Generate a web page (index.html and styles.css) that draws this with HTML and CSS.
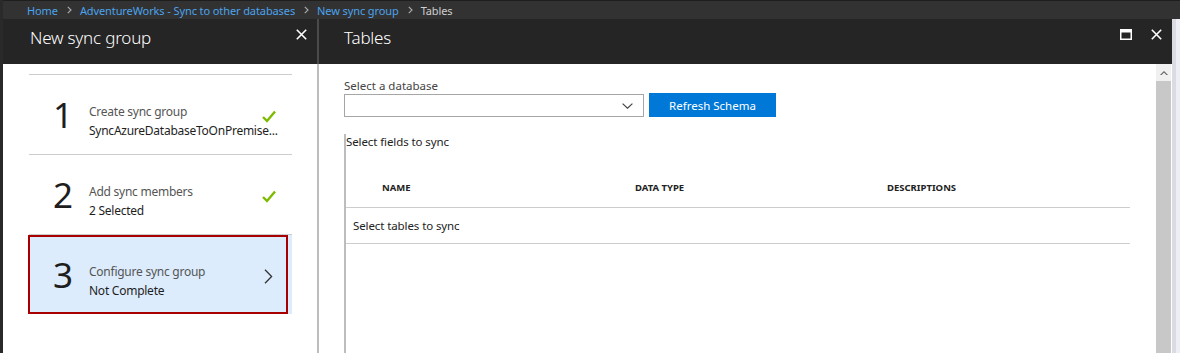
FILE: index.html
```html
<!DOCTYPE html>
<html lang="en">
<head>
    <meta charset="UTF-8">
    <meta name="viewport" content="width=device-width, initial-scale=1.0">
    <title>Tables - New sync group</title>
    <link rel="stylesheet" href="styles.css">
</head>
<body>
    <div class="portal">
        <nav class="breadcrumb">
            <a href="#">Home</a>
            <svg class="crumb-sep" width="5" height="8" viewBox="0 0 5 8"><path d="M0.8 0.8 L4 4 L0.8 7.2" fill="none" stroke="#a8a8a8" stroke-width="1.2"/></svg>
            <a href="#">AdventureWorks - Sync to other databases</a>
            <svg class="crumb-sep" width="5" height="8" viewBox="0 0 5 8"><path d="M0.8 0.8 L4 4 L0.8 7.2" fill="none" stroke="#a8a8a8" stroke-width="1.2"/></svg>
            <a href="#">New sync group</a>
            <svg class="crumb-sep" width="5" height="8" viewBox="0 0 5 8"><path d="M0.8 0.8 L4 4 L0.8 7.2" fill="none" stroke="#a8a8a8" stroke-width="1.2"/></svg>
            <span class="crumb-current">Tables</span>
        </nav>

        <div class="blades">
            <!-- left blade: wizard steps -->
            <section class="blade blade-steps">
                <header class="blade-header">
                    <h2>New sync group</h2>
                    <div class="blade-actions">
                        <svg width="11" height="11" viewBox="0 0 11 11"><path d="M0.8 0.8 L10.2 10.2 M10.2 0.8 L0.8 10.2" stroke="#fff" stroke-width="1.6"/></svg>
                    </div>
                </header>
                <div class="blade-body">
                    <ul class="steps">
                        <li class="step">
                            <div class="step-inner">
                                <div class="step-num">1</div>
                                <div class="step-text">
                                    <div class="step-title">
                                        <span>Create sync group</span>
                                        <svg class="step-check" width="14" height="13" viewBox="0 0 14 13"><path d="M1 7 L5 11 L13 1.5" fill="none" stroke="#7fba00" stroke-width="2.4"/></svg>
                                    </div>
                                    <div class="step-sub">SyncAzureDatabaseToOnPremise...</div>
                                </div>
                            </div>
                        </li>
                        <li class="step">
                            <div class="step-inner">
                                <div class="step-num">2</div>
                                <div class="step-text">
                                    <div class="step-title">
                                        <span>Add sync members</span>
                                        <svg class="step-check" width="14" height="13" viewBox="0 0 14 13"><path d="M1 7 L5 11 L13 1.5" fill="none" stroke="#7fba00" stroke-width="2.4"/></svg>
                                    </div>
                                    <div class="step-sub">2 Selected</div>
                                </div>
                            </div>
                        </li>
                        <li class="step active">
                            <div class="step-inner">
                                <div class="step-num">3</div>
                                <div class="step-text">
                                    <div class="step-title">
                                        <span>Configure sync group</span>
                                        <svg class="step-chevron" width="9" height="15" viewBox="0 0 9 15"><path d="M1 0.8 L7.6 7.5 L1 14.2" fill="none" stroke="#333" stroke-width="1.3"/></svg>
                                    </div>
                                    <div class="step-sub">Not Complete</div>
                                </div>
                            </div>
                        </li>
                    </ul>
                </div>
            </section>

            <div class="blade-divider"></div>

            <!-- right blade: tables -->
            <section class="blade blade-tables">
                <header class="blade-header">
                    <h2>Tables</h2>
                    <div class="blade-actions">
                        <svg width="12" height="11" viewBox="0 0 12 11"><rect x="0.75" y="0.75" width="10.5" height="9.5" fill="none" stroke="#fff" stroke-width="1.5"/><rect x="0" y="0" width="12" height="3.5" fill="#fff"/></svg>
                        <svg width="11" height="11" viewBox="0 0 11 11"><path d="M0.8 0.8 L10.2 10.2 M10.2 0.8 L0.8 10.2" stroke="#fff" stroke-width="1.6"/></svg>
                    </div>
                </header>
                <div class="blade-content">
                    <div class="blade-main">
                        <label class="field-label">Select a database</label>
                        <div class="db-row">
                            <div class="dropdown">
                                <svg width="11" height="6" viewBox="0 0 11 6"><path d="M0.6 0.6 L5.5 5.2 L10.4 0.6" fill="none" stroke="#444" stroke-width="1.2"/></svg>
                            </div>
                            <button class="btn-primary">Refresh Schema</button>
                        </div>

                        <div class="fields">
                            <div class="fields-title">Select fields to sync</div>
                            <div class="grid-head">
                                <div>Name</div>
                                <div>Data type</div>
                                <div>Descriptions</div>
                            </div>
                            <div class="grid-row">Select tables to sync</div>
                        </div>
                    </div>
                    <div class="scrollbar">
                        <div class="scroll-up">
                            <svg width="8" height="5" viewBox="0 0 8 5"><path d="M0 5 L4 1 L8 5 L6.5 5 L4 2.6 L1.5 5 Z" fill="#5f5f5f"/></svg>
                        </div>
                        <div class="scroll-thumb"></div>
                    </div>
                </div>
            </section>

            <div class="portal-edge"></div>
        </div>
    </div>
</body>
</html>
```

FILE: styles.css
```css
* {
    box-sizing: border-box;
}

body {
    margin: 0;
    font-family: 'Segoe UI', 'Noto Sans', 'Open Sans', sans-serif;
    color: #222;
    background-color: #2a2a2a;
    overflow: hidden;
}

.portal {
    height: 353px;
    margin-left: 3px;
    display: flex;
    flex-direction: column;
}

/* breadcrumb */
.breadcrumb {
    height: 19px;
    flex: none;
    display: flex;
    align-items: center;
    padding-left: 24px;
    background-color: #323232;
    border-top: 1px solid #1e1e1e;
    font-size: 11px;
    letter-spacing: -0.1px;
}

.breadcrumb a {
    color: #4ba3ec;
    text-decoration: none;
}

.crumb-sep {
    margin: 0 8px 0 9px;
}

.crumb-current {
    color: #cfcfcf;
}

/* blades */
.blades {
    flex: 1;
    display: flex;
    min-height: 0;
}

.blade {
    display: flex;
    flex-direction: column;
    background-color: #fff;
}

.blade-header {
    height: 45px;
    flex: none;
    display: flex;
    align-items: flex-start;
    justify-content: space-between;
    background-color: #252525;
}

.blade-header h2 {
    margin: 0;
    padding-top: 6px;
    font-size: 17px;
    font-weight: 300;
    color: #fff;
    line-height: 25px;
    letter-spacing: -0.2px;
}

.blade-actions {
    display: flex;
    align-items: center;
    gap: 19px;
    padding-top: 10px;
}

.blade-steps {
    width: 314px;
}

.blade-steps .blade-header {
    padding: 0 10px 0 27px;
}

.blade-divider {
    width: 2px;
    flex: none;
    background: linear-gradient(#4a4a4a 0, #4a4a4a 45px, #bdbdbd 45px);
}

.blade-tables {
    width: 853px;
}

.blade-tables .blade-header {
    padding: 0 10px 0 25px;
}

.portal-edge {
    flex: 1;
    background: linear-gradient(90deg, #dadbe3 0, #dadbe3 4px, #eeeef5 4px);
}

/* steps */
.blade-body {
    flex: 1;
    padding: 10px 0 0 26px;
}

.steps {
    list-style: none;
    margin: 0;
    padding: 0;
    width: 263px;
}

.step {
    height: 80px;
    border-top: 1px solid #cdcdcd;
}

.step-inner {
    height: 79px;
    display: flex;
    padding: 22px 16px 0 24px;
}

.step-num {
    width: 36px;
    flex: none;
    font-size: 35px;
    line-height: 36px;
    color: #1e1e1e;
}

.step-text {
    flex: 1;
    min-width: 0;
    margin-top: 5px;
    font-size: 12px;
    line-height: 19px;
    letter-spacing: -0.25px;
}

.step-title {
    display: flex;
    justify-content: space-between;
    color: #555;
}

.step-check {
    align-self: flex-end;
    margin-bottom: -2px;
}

.step-chevron {
    align-self: flex-end;
    margin-bottom: -3px;
}

.step-sub {
    color: #1e1e1e;
    white-space: nowrap;
}

.step.active {
    background-color: #dcecfc;
}

.step.active .step-inner {
    margin-left: -1px;
    margin-right: 4px;
    border: 2px solid #a80000;
    padding: 20px 13px 0 23px;
}

/* tables blade */
.blade-content {
    flex: 1;
    display: flex;
    min-height: 0;
}

.blade-main {
    flex: 1;
    display: flex;
    flex-direction: column;
    padding: 14px 0 0 25px;
}

.field-label {
    display: block;
    font-size: 11.5px;
    line-height: 15px;
    color: #444;
}

.db-row {
    display: flex;
    align-items: flex-end;
    gap: 5px;
}

.dropdown {
    width: 300px;
    height: 23px;
    border: 1px solid #a6a6a6;
    display: flex;
    align-items: center;
    justify-content: flex-end;
    padding-right: 10px;
}

.btn-primary {
    width: 127px;
    height: 24px;
    border: none;
    background-color: #0078d7;
    color: #fff;
    font-family: inherit;
    font-size: 11.5px;
    padding: 0;
}

.fields {
    flex: 1;
    width: 786px;
    margin-top: 17px;
    border-left: 2px solid #bdbdbd;
    font-size: 11.5px;
    letter-spacing: -0.1px;
}

.fields-title {
    line-height: 16px;
}

.grid-head {
    display: grid;
    grid-template-columns: 253px 252px 1fr;
    height: 40px;
    margin-top: 18px;
    padding-left: 36px;
    align-items: center;
    border-bottom: 1px solid #cdcdcd;
    font-size: 9.5px;
    font-weight: bold;
    text-transform: uppercase;
    color: #222;
    letter-spacing: 0;
}

.grid-row {
    height: 36px;
    display: flex;
    align-items: center;
    padding-left: 7px;
    border-bottom: 1px solid #cdcdcd;
}

/* scrollbar */
.scrollbar {
    width: 16px;
    flex: none;
    display: flex;
    flex-direction: column;
    border-right: 1px solid #fff;
}

.scroll-up {
    height: 17px;
    display: flex;
    align-items: center;
    justify-content: center;
    background-color: #f0f0f0;
}

.scroll-thumb {
    flex: 1;
    background-color: #c8c8c8;
}
```
